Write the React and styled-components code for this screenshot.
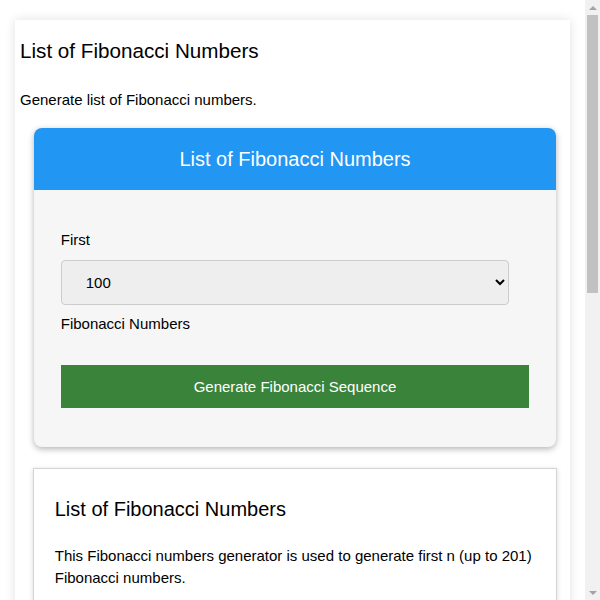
import React from "react";
import styled, { createGlobalStyle } from "styled-components";

const Global = createGlobalStyle`
  html, body { margin: 0; padding: 0; background: #fff; }
  body { font-family: "Liberation Sans", Arial, sans-serif; color: #000; }
  * { box-sizing: border-box; }
`;

const Page = styled.main`
  margin: 20px 30px 20px 15px;
  padding: 19px 0 30px 5px;
  background: #fff;
  box-shadow: 0 0 10px rgba(0, 0, 0, 0.12);
`;

const ScrollTrack = styled.div`
  position: fixed;
  top: 0;
  right: 0;
  width: 15px;
  height: 100vh;
  background: #f1f1f1;
  display: flex;
  flex-direction: column;
  align-items: center;
`;

const Arrow = styled.div`
  flex: 0 0 15px;
  width: 15px;
  display: flex;
  align-items: center;
  justify-content: center;
  &::after {
    content: "";
    border-left: 4px solid transparent;
    border-right: 4px solid transparent;
    ${(p) =>
      p.$down
        ? "border-top: 4px solid #a3a3a3;"
        : "border-bottom: 4px solid #a3a3a3;"}
  }
`;

const Thumb = styled.div`
  width: 11px;
  height: 278px;
  background: #c1c1c1;
`;

const Spacer = styled.div`
  flex: 1;
`;

const Title = styled.h1`
  margin: 0;
  font-size: 20.65px;
  font-weight: 400;
  line-height: 24px;
`;

const Intro = styled.p`
  margin: 28px 0 19px;
  font-size: 15px;
  line-height: 18px;
`;

const CalcCard = styled.section`
  width: 95%;
  margin: 0 auto;
  border-radius: 8px;
  overflow: hidden;
  background: #f6f6f6;
  box-shadow: 0 2px 6px rgba(0, 0, 0, 0.3);
`;

const CalcHeader = styled.h2`
  margin: 0;
  padding: 19px 10px;
  background: #2196f3;
  color: #fff;
  text-align: center;
  font-size: 20px;
  font-weight: 400;
  line-height: 24px;
`;

const CalcBody = styled.form`
  padding: 41px 27px 39px;
  display: flex;
  flex-direction: column;
`;

const Label = styled.label`
  display: block;
  font-size: 15px;
  line-height: 18px;
  margin-top: ${(p) => p.$top || 0}px;
`;

const Select = styled.select`
  margin-top: 11px;
  width: calc(100% - 20px);
  height: 45px;
  padding: 0 20px;
  font-family: "Liberation Sans", Arial, sans-serif;
  font-size: 15px;
  color: #000;
  background: #eee;
  border: 1px solid #ccc;
  border-radius: 4px;
`;

const Button = styled.button`
  margin-top: 32px;
  width: 100%;
  height: 43px;
  border: none;
  border-radius: 0;
  background: #3a833a;
  color: #fff;
  font-family: "Liberation Sans", Arial, sans-serif;
  font-size: 15px;
  cursor: pointer;
`;

const InfoCard = styled.article`
  width: calc(95% + 2px);
  margin: 21px auto 0;
  padding: 28px 21px 24px;
  background: #fff;
  border: 1px solid #d4d4d4;
  box-shadow: 0 1px 5px rgba(0, 0, 0, 0.15);
`;

const InfoTitle = styled.h2`
  margin: 0;
  font-size: 20px;
  font-weight: 400;
  line-height: 24px;
`;

const InfoText = styled.p`
  margin: ${(p) => (p.$first ? 24 : 16)}px 0 0;
  font-size: 15px;
  line-height: 22px;
`;

const options = Array.from({ length: 201 }, (_, i) => i + 1);

export default function App() {
  return (
    <>
      <Global />
      <Page>
        <Title>List of Fibonacci Numbers</Title>
        <Intro>Generate list of Fibonacci numbers.</Intro>
        <CalcCard>
          <CalcHeader>List of Fibonacci Numbers</CalcHeader>
          <CalcBody onSubmit={(e) => e.preventDefault()}>
            <Label htmlFor="count">First</Label>
            <Select id="count" defaultValue="100">
              {options.map((n) => (
                <option key={n} value={n}>
                  {n}
                </option>
              ))}
            </Select>
            <Label $top={10}>Fibonacci Numbers</Label>
            <Button type="submit">Generate Fibonacci Sequence</Button>
          </CalcBody>
        </CalcCard>
        <InfoCard>
          <InfoTitle>List of Fibonacci Numbers</InfoTitle>
          <InfoText $first>
            This Fibonacci numbers generator is used to generate first n (up to 201)
            Fibonacci numbers.
          </InfoText>
          <InfoText>
            The Fibonacci sequence is a series of numbers in which each number is the
            sum of the two preceding ones, usually starting with 0 and 1. The sequence
            goes 0, 1, 1, 2, 3, 5, 8, 13, 21, 34, 55, 89, 144 and so on.
          </InfoText>
          <InfoText>
            Select how many numbers you want in the list and press the button to
            generate the sequence. The result lists every Fibonacci number from the
            first one up to the number you chose.
          </InfoText>
          <InfoText>
            Fibonacci numbers appear in many places in mathematics and in nature, such
            as the branching of trees, the arrangement of leaves on a stem and the
            spirals of a pine cone or a sunflower head.
          </InfoText>
          <InfoText>
            F(n) = F(n-1) + F(n-2), with F(0) = 0 and F(1) = 1.
          </InfoText>
        </InfoCard>
      </Page>
      <ScrollTrack aria-hidden="true">
        <Arrow />
        <Thumb />
        <Spacer />
        <Arrow $down />
      </ScrollTrack>
    </>
  );
}
